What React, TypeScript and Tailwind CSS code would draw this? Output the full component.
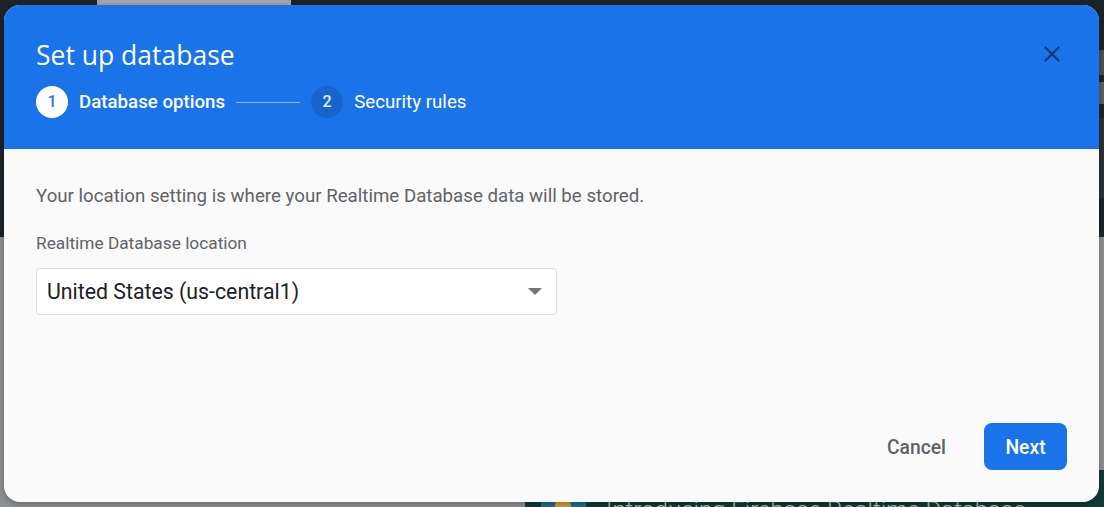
import { X } from "lucide-react";

export default function App() {
  return (
    <div
      className="relative w-[1104px] h-[507px] overflow-hidden bg-[#1c2429]"
      style={{ fontFamily: "Roboto, 'Liberation Sans', sans-serif" }}
    >
      {/* Page behind the scrim */}
      <div className="absolute left-[97px] top-0 w-[194px] h-[6px] bg-[#a4a5a7]" />
      <div className="absolute left-0 top-[237px] w-[1104px] h-[270px] bg-[#8e9092]" />
      <div className="absolute right-0 top-[50px] w-[8px] h-[25px] bg-[#4a5054]" />
      <div className="absolute right-0 top-[82px] w-[8px] h-[22px] bg-[#5a5f62]" />
      <div className="absolute right-0 top-[118px] w-[8px] h-[80px] bg-[#2a3236]" />
      <div className="absolute left-[525px] top-[470px] w-[579px] h-[37px] bg-[#0e3b38] flex items-start gap-[20px] pl-[16px] pt-[26px]">
        <div className="w-[45px] h-[14px] bg-[#1a6f9a] rounded-t-[2px] relative shrink-0">
          <div className="absolute left-[14px] top-[2px] w-[16px] h-[12px] rounded-t-full bg-[#d99a2b]" />
        </div>
        <span className="text-[24px] leading-[28px] font-light text-[#b8c2c0] whitespace-nowrap">
          Introducing Firebase Realtime Database
        </span>
      </div>

      {/* Dialog */}
      <div className="absolute left-[4px] top-[5px] w-[1095px] h-[497px] rounded-[16px] overflow-hidden bg-[#fafafa] shadow-[0_2px_6px_rgba(0,0,0,0.3)] flex flex-col">
        <div className="h-[144px] bg-[#1a73e8] px-[32px] pt-[33px] relative">
          <h1
            className="text-[26.5px] leading-[34px] text-white"
            style={{ fontFamily: "'Open Sans', Roboto, sans-serif" }}
          >
            Set up database
          </h1>
          <div className="flex items-center mt-[14px]">
            <div className="w-[32px] h-[32px] rounded-full bg-white flex items-center justify-center text-[16px] font-medium text-[#1a73e8]">
              1
            </div>
            <span className="ml-[11px] text-[18.7px] font-medium text-white">Database options</span>
            <div className="ml-[11px] w-[64px] h-px bg-[#8ab4f8]" />
            <div className="ml-[11px] w-[32px] h-[32px] rounded-full bg-[#1765cc] flex items-center justify-center text-[16px] font-medium text-[#e8f0fe]">
              2
            </div>
            <span className="ml-[11px] text-[18.7px] text-white">Security rules</span>
          </div>
          <button className="absolute right-[32px] top-[34px] w-[30px] h-[30px] flex items-center justify-center text-[#0b3d6e]">
            <X className="w-[26px] h-[26px]" strokeWidth={2.2} />
          </button>
        </div>

        <div className="flex-1 flex flex-col px-[32px] pt-[35px] pb-[32px]">
          <p className="text-[18.7px] leading-[24px] text-[#5f6368]">
            Your location setting is where your Realtime Database data will be stored.
          </p>
          <label className="mt-[25px] text-[17.3px] leading-[20px] text-[#5f6368]">
            Realtime Database location
          </label>
          <div className="mt-[15px] w-[521px] h-[47px] rounded-[4px] border border-[#dadce0] bg-white flex items-center justify-between pl-[10px] pr-[14px]">
            <span className="text-[21.3px] text-[#202124]">United States (us-central1)</span>
            <div className="w-0 h-0 border-l-[7px] border-r-[7px] border-t-[7px] border-l-transparent border-r-transparent border-t-[#757575]" />
          </div>
          <div className="mt-auto flex items-center justify-end gap-[20px]">
            <button className="h-[47px] px-[18px] pt-[3px] text-[19.3px] font-medium text-[#5f6368]">Cancel</button>
            <button className="w-[83px] h-[47px] pt-[3px] rounded-[8px] bg-[#1a73e8] text-[19.3px] font-medium text-white">
              Next
            </button>
          </div>
        </div>
      </div>
    </div>
  );
}
